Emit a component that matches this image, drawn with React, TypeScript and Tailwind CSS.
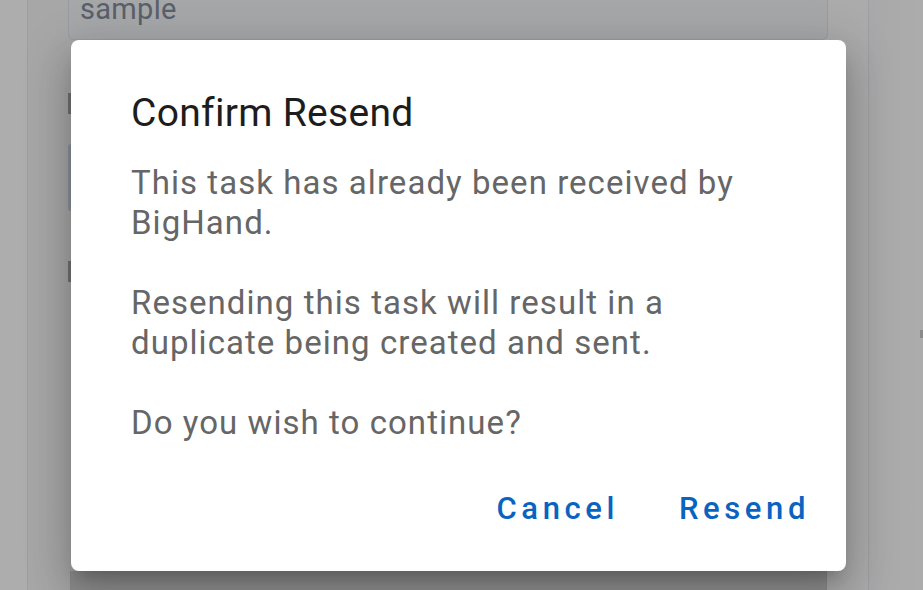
import React from 'react'

const MESSAGE = [
  ['This task has already been received by', 'BigHand.'],
  ['Resending this task will result in a', 'duplicate being created and sent.'],
  ['Do you wish to continue?'],
]

function ConfirmDialog() {
  return (
    <div
      role="dialog"
      aria-modal="true"
      aria-labelledby="confirm-title"
      className="absolute left-[71px] top-[40px] w-[775px] h-[531px] rounded-[8px] bg-white flex flex-col shadow-[0_11px_15px_-7px_rgba(0,0,0,0.2),0_24px_38px_3px_rgba(0,0,0,0.14),0_9px_46px_8px_rgba(0,0,0,0.12)]"
    >
      <h2
        id="confirm-title"
        className="pl-[60px] pt-[49px] text-[39px] leading-[48px] tracking-[0.3px] text-[#1d1d1d] font-normal"
      >
        Confirm Resend
      </h2>

      <div className="pl-[60px] pr-[40px] mt-[26px] flex flex-col gap-[40px] text-[33px] leading-[40px] tracking-[1.05px] text-[#666666]">
        {MESSAGE.map((p, i) => (
          <p key={i} className="whitespace-nowrap">
            {p.map((line, j) => (
              <React.Fragment key={j}>
                {j > 0 && <br />}
                {line}
              </React.Fragment>
            ))}
          </p>
        ))}
      </div>

      <div className="mt-auto mb-[44px] pr-[36px] flex justify-end gap-[60px] text-[31px] leading-[36px] font-medium tracking-[4.6px] text-[#0a63c1]">
        <button>Cancel</button>
        <button>Resend</button>
      </div>
    </div>
  )
}

export default function App() {
  return (
    <div className="relative w-[923px] h-[590px] overflow-hidden bg-[#acacac] font-['Roboto','Noto_Sans',sans-serif]">
      {/* page behind the scrim */}
      <div className="flex h-full">
        <div className="w-[28px] shrink-0 bg-[#adadad] border-r border-[#9d9ea3]" />

        <div className="w-[841px] shrink-0 bg-gradient-to-r from-[#a7a7a7] to-[#ababab] border-r border-[#9d9ea3] pl-[40px] pr-[40px] flex flex-col">
          <div className="h-[41px] -mt-[1px] rounded-b-[6px] border border-t-0 border-[#9a9ca4] bg-[#a6a7a9] pl-[11px] text-[29px] leading-none text-[#5a6069] tracking-[0.3px]">
            <div className="-mt-[4px]">sample</div>
          </div>

          <div className="mt-[53px] w-[3px] h-[21px] bg-[#727272]" />
          <div className="mt-[30px] w-[3px] h-[67px] rounded-l-[3px] bg-[#8c929b]" />
          <div className="mt-[50px] w-[3px] h-[21px] bg-[#727272]" />

          <div className="mt-auto ml-[2px] mr-[1px] h-[19px] border-x border-[#8a8b8f] bg-[#909090]" />
        </div>

        <div className="flex-1 bg-gradient-to-r from-[#a8a8a8] to-[#acacac] relative">
          <div className="absolute right-0 top-[330px] w-[3px] h-[8px] bg-[#8a8a8a]" />
        </div>
      </div>

      <ConfirmDialog />
    </div>
  )
}
